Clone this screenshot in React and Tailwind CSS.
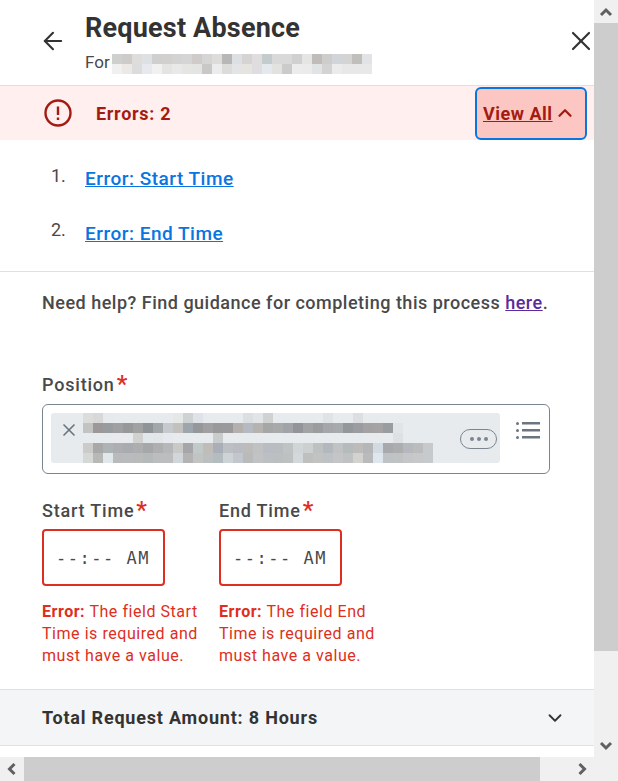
import { ArrowLeft, X, ChevronUp, ChevronDown } from "lucide-react"

const nameRows = [
  ["#cfcfce","#cdcccb","#dedddb","#dde1e4","#cfcfd0","#d1d0cf","#d3d3d3","#d6d5d5","#cfcbcb","#d5d5d5","#dddcda","#b8b7b8","#dde0e3","#d6d4d2","#dfdddd","#c4cbcd","#d9d9d9","#d9d9d9","#cfd0cf","#e5e5e3","#c0bcba","#cdcdcc","#d1d5d9","#d4d4d4","#c1bfbc","#e1e3e6"],
  ["#f0f0f0","#ebe8e5","#dcdcdc","#e8e9ee","#f1f1f2","#e4e4e2","#e9e9e9","#e5e5e4","#e4e4e2","#c9c8c6","#ececef","#dcdcdb","#e2e4e6","#e6e4df","#e0dde1","#e3e9ec","#e2e2e0","#cbcbcb","#ececec","#ebebeb","#e0e4e4","#d3d3d3","#ebebeb","#e8e8e8","#e8e8e8","#e8e8e8"],
]

const L = "#e8ebed"
const positionRows = [
  ["#dcdcdb","#d8d8d8","#e6eaec",L,L,L,L,L,L,"#e6e8e8","#cfd2d2","#dfe3e9",L,L,L,L,"#dcdfe2","#e2e5e8","#cfd2d0",L,L,L,L,L,"#e0e3e5",L,L,"#dcdee1",L,L,L,L,L,L,L],
  ["#c2c4c3","#9c9898","#999c9e","#9fa0a1","#979899","#a0a2a1","#8f9597","#a3a7ab","#c7cacc","#c3c1bd","#9da5ad","#95979a","#a0a0a2","#99999b","#9a9a9c","#b3b0ae","#b5bac2","#b5b2af","#a5a6a6","#a8a9a9","#a0a4a9","#92949a","#a2a3a5","#9b9c9f","#a4a6a9","#a7aaab","#94979a","#9b9c9f","#a3a1a2","#a5a3a4","#9a9da0","#e2e5e8",L,L,L],
  [L,L,L,L,L,"#d0d2d0","#e2e8ea","#e3e6e8","#e6eaee",L,L,L,L,"#c8cccc",L,L,L,L,L,L,L,L,L,L,L,L,L,L,L,L,L,"#dee1e4",L,L,L],
  ["#cbcbca","#a9a8a8","#aeb3b6","#acaeb1","#a9abae","#adaeb0","#a5a7a9","#aeafb1","#b6b7b8","#c9c9c7","#a6a6a8","#c2c9c9","#c0bdb9","#a9aeb8","#bcc0c4","#b9bcc0","#bcbcbb","#c0c1c3","#b9bcc2","#babdc0","#bfc3c3","#d0d5d8","#ccd0d1","#bfc0c0","#b2b8bd","#c0c2c4","#b5babd","#bdbcba","#b4b6b8","#d4dae2","#a8a9ac","#aeadae","#b5b9bd","#bbbcbe","#c8c9ca"],
  ["#d6d8d7","#b8b8b6","#e0e8ec","#b9babc","#babbbd","#b9bbbb","#b5b9ba","#bbbdbe","#bcbdbe","#d0d6da","#b3b3b3","#c2c4c3","#bcbfc0","#b4bcc0","#cdd3d6","#c3c6cc","#b9bbba","#c1c2c4","#bcc0c2","#bcbfc0","#bfc1c1","#d3d8da","#bdc0bf","#c0c3c2","#bfc2c4","#c3c5c6","#c0c1c2","#d2d2cf","#b9babb","#dfe6ee","#bfc2c4","#c0c3c4","#c4c7c8","#c6c8ca","#c6cacc"],
]

// pixelated blocks that hide names in the screenshot
function Mosaic({ rows, className }) {
  return (
    <svg width={rows[0].length * 10} height={rows.length * 10} className={className}>
      {rows.map((row, y) =>
        row.map((fill, x) => <rect key={x + "-" + y} x={x * 10} y={y * 10} width="10" height="10" fill={fill} />)
      )}
    </svg>
  )
}

function Arrow({ d }) {
  return (
    <svg width="14" height="14" viewBox="0 0 14 14" fill="none" stroke="#606060" strokeWidth="3">
      <path d={d} />
    </svg>
  )
}

function FieldLabel({ children }) {
  return (
    <div className="flex h-[22px] pt-[1px] text-[18px] leading-[22px] font-medium text-[#494949] tracking-[0.8px]">
      {children}
      <span className="ml-[2px] text-[#de2e21] text-[24px] leading-[20px]">*</span>
    </div>
  )
}

function TimeField({ label, name }) {
  return (
    <div className="w-[177px]">
      <FieldLabel>{label}</FieldLabel>
      <div className="mt-[8px] w-[123px] h-[57px] border-2 border-[#de2e21] rounded-[4px] flex items-center pt-[2px] pl-[12px] font-['DejaVu_Sans_Mono',monospace] text-[17px] tracking-[1.5px] text-[#4a4a4a] whitespace-pre">
        {"--:-- AM"}
      </div>
      <p className="mt-[15px] w-[165px] text-[16px] leading-[22px] tracking-[0.55px] text-[#de2e21]">
        <b className="font-bold">Error:</b> The field {name} Time is required and must have a value.
      </p>
    </div>
  )
}

export default function App() {
  return (
    <div className="w-[618px] h-[781px] overflow-hidden flex flex-col bg-white font-['Roboto',sans-serif]">
      <div className="flex h-[757px]">
        <main className="w-[594px] flex flex-col">
          <header className="h-[85px] flex items-start">
            <ArrowLeft className="mt-[27px] ml-[39px] text-[#333]" size={28} strokeWidth={1.8} />
            <div className="ml-[18px] flex-1">
              <h1 className="mt-[12px] text-[27px] tracking-[0.2px] leading-[32px] font-bold text-[#333]">Request Absence</h1>
              <div className="mt-[10px] flex items-start text-[17px] leading-[16px] text-[#494949]">
                For
                <Mosaic rows={nameRows} className="ml-[2px]" />
              </div>
            </div>
            <X className="mt-[25px] mr-[-3px] text-[#333]" size={32} strokeWidth={1.6} />
          </header>

          <div className="h-[55px] border-t border-[#e2dfe0] bg-[#ffefee] flex items-center pl-[44px] pr-[7px]">
            <svg width="28" height="28" viewBox="0 0 28 28" fill="none" stroke="#a31b12">
              <circle cx="14" cy="14" r="12.5" strokeWidth="2.4" />
              <path d="M14 7.5v8.5M14 18.5v2.5" strokeWidth="2.4" />
            </svg>
            <span className="ml-[24px] text-[18px] tracking-[0.7px] font-bold text-[#a31b12]">Errors: 2</span>
            <button className="ml-auto w-[112px] h-[53px] border-2 border-[#0875e1] rounded-[6px] bg-[#fcc7c3] flex items-center pl-[6px] text-[#a31b12] text-[18px] tracking-[0.5px] font-bold">
              <span className="underline">View All</span>
              <ChevronUp className="ml-[1px]" size={22} strokeWidth={2.5} />
            </button>
          </div>

          <ol className="h-[132px] border-b border-[#e0e0e0] pl-[51px] pt-[26px] flex flex-col gap-[33px]">
            <li className="flex h-[22px]">
              <span className="-mt-[1px] w-[34px] text-[18px] leading-[22px] text-[#494949]">1.</span>
              <a className="mt-[2px] text-[19px] tracking-[0.5px] leading-[22px] font-medium text-[#0875e1] underline">Error: Start Time</a>
            </li>
            <li className="flex h-[22px]">
              <span className="-mt-[2px] w-[34px] text-[18px] leading-[22px] text-[#494949]">2.</span>
              <a className="mt-[2px] text-[19px] tracking-[0.5px] leading-[22px] font-medium text-[#0875e1] underline">Error: End Time</a>
            </li>
          </ol>

          <p className="mt-[20px] ml-[42px] text-[18px] tracking-[0.5px] leading-[22px] font-medium text-[#494949] whitespace-nowrap">
            Need help? Find guidance for completing this process <a className="text-[#5c2a9d] underline">here</a>.
          </p>

          <section className="mt-[59px] px-[42px] flex-1">
            <FieldLabel>Position</FieldLabel>
            <div className="mt-[9px] w-[508px] h-[70px] border border-[#7b858f] rounded-[6px] flex pl-[8px] pt-[8px]">
              <div className="w-[449px] h-[50px] bg-[#e8ebed] rounded-[3px] flex relative">
                <X className="mt-[7px] ml-[8px] text-[#6b7680]" size={20} strokeWidth={2} />
                <Mosaic rows={positionRows} className="ml-[4px]" />
                <div className="absolute left-[409px] top-[16px] w-[37px] h-[20px] border border-[#7b858f] rounded-full flex items-center justify-center gap-[3px] bg-[#e8ebed]">
                  <i className="w-[4px] h-[4px] rounded-full bg-[#7b858f]" />
                  <i className="w-[4px] h-[4px] rounded-full bg-[#7b858f]" />
                  <i className="w-[4px] h-[4px] rounded-full bg-[#7b858f]" />
                </div>
              </div>
              <svg className="ml-[16px] mt-[7px]" width="24" height="20" viewBox="0 0 24 20" fill="#6b7680">
                <rect x="0" y="2" width="3" height="3" rx="1.5" />
                <rect x="0" y="9" width="3" height="3" rx="1.5" />
                <rect x="0" y="16" width="3" height="3" rx="1.5" />
                <rect x="6" y="2" width="18" height="2.5" />
                <rect x="6" y="9" width="18" height="2.5" />
                <rect x="6" y="16" width="18" height="2.5" />
              </svg>
            </div>

            <div className="mt-[25px] flex">
              <TimeField label="Start Time" name="Start" />
              <TimeField label="End Time" name="End" />
            </div>
          </section>

          <div className="h-[57px] mb-[11px] border-y border-[#e0e1e5] bg-[#f4f5f7] flex items-center justify-between pl-[42px] pr-[28px]">
            <span className="text-[18px] tracking-[0.8px] font-bold text-[#333]">Total Request Amount: 8 Hours</span>
            <ChevronDown className="text-[#333]" size={22} strokeWidth={2} />
          </div>
        </main>

        <div className="w-[24px] bg-[#f0f0f0] flex flex-col">
          <div className="h-[23px] flex items-center justify-center"><Arrow d="M2 10l5-5 5 5" /></div>
          <div className="h-[628px] bg-[#cdcdcd]" />
          <div className="mt-auto h-[23px] flex items-center justify-center"><Arrow d="M2 4l5 5 5-5" /></div>
        </div>
      </div>

      <div className="h-[24px] bg-[#f0f0f0] flex">
        <div className="w-[24px] flex items-center justify-center"><Arrow d="M9.5 2l-5 5 5 5" /></div>
        <div className="w-[516px] bg-[#cdcdcd]" />
        <div className="ml-auto w-[24px] mr-[24px] flex items-center justify-center"><Arrow d="M4.5 2l5 5-5 5" /></div>
      </div>
    </div>
  )
}
